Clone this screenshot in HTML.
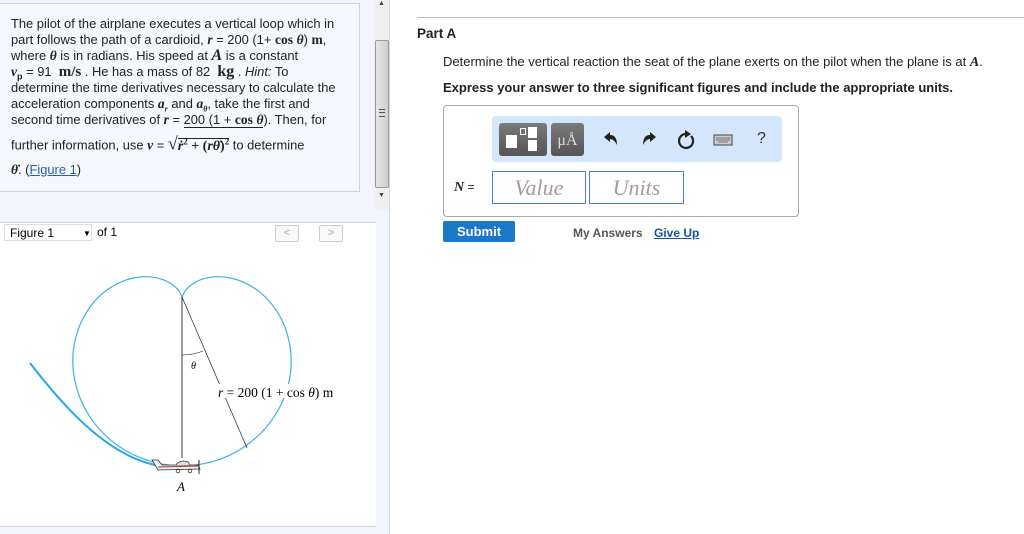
<!DOCTYPE html>
<html><head><meta charset="utf-8"><style>
body{margin:0;width:1024px;height:534px;overflow:hidden;background:#fff;font-family:"Liberation Sans",Arial,sans-serif;position:relative}
.abs{position:absolute}
#left{left:0;top:0;width:389px;height:534px;background:#f2f6fc;border-right:1px solid #c9d8ea}
#txt{left:0;top:3px;width:360px;height:189px;border:1px solid #c5d6ea;border-left:none;background:#f4f8fd;box-sizing:border-box;font-size:12.9px;color:#222}
#txt div{position:absolute;left:11px;white-space:nowrap;line-height:16px}
.m{font-family:"Liberation Serif",serif;font-style:italic;font-weight:bold;font-size:13.5px}
.s{font-family:"Liberation Serif",serif;font-weight:bold;font-size:13.5px}
#sb{left:374px;top:0;width:15px;height:210px;background:#f0f0f0}
#thumb{left:375px;top:40px;width:12px;height:146px;background:linear-gradient(90deg,#e6e6e6,#cfcfcf);border:1px solid #9a9a9a;border-radius:2px}
#figbar{left:0;top:222px;width:376px;height:21px;background:#fff;border-top:1px solid #c9d8ea;border-bottom:1px solid #c9d8ea}
#fig{left:0;top:244px;width:376px;height:282px;background:#fff;border-bottom:1px solid #c9d8ea}
.btn{border:1px solid #c8ced6;border-radius:2px;background:#f8f8f8;width:22px;height:15px;color:#aaa;font-size:11px;text-align:center;line-height:15px}
#right{left:390px;top:0;width:634px;height:534px}
</style></head><body>
<div id="left" class="abs"></div>
<div id="txt" class="abs">
<div style="top:12px">The pilot of the airplane executes a vertical loop which in</div>
<div style="top:28px">part follows the path of a cardioid, <span class="m">r</span> = 200 (1+ <span class="s">cos</span> <span class="m">θ</span>) <span class="s">m</span>,</div>
<div style="top:44px">where <span class="m">θ</span> is in radians. His speed at <span class="m" style="font-size:16px">A</span> is a constant</div>
<div style="top:60px"><span class="m">v</span><sub style="font-size:9px;font-weight:bold">p</sub> = 91 &nbsp;<span class="s" style="font-size:15px">m/s</span> . He has a mass of 82 &nbsp;<span class="s" style="font-size:16px">kg</span> . <i>Hint:</i> To</div>
<div style="top:76px">determine the time derivatives necessary to calculate the</div>
<div style="top:92px">acceleration components <span class="m">a<sub style="font-size:8px">r</sub></span> and <span class="m">a<sub style="font-size:8px">θ</sub></span>, take the first and</div>
<div style="top:108px">second time derivatives of <span class="m">r</span> = <span style="border-bottom:1px solid #222">200 (1 + <span class="s">cos</span> <span class="m">θ</span></span>). Then, for</div>
<div style="top:129px">further information, use <span class="m">v</span> = <span style="font-family:'Liberation Serif',serif;font-size:18px">√</span><span style="border-top:1px solid #222;font-family:'Liberation Serif',serif;font-weight:bold;font-size:14px"><i>ṙ</i><sup style="font-size:9px">2</sup> + (<i>rθ̇</i>)<sup style="font-size:9px">2</sup></span> to determine</div>
<div style="top:158px"><span class="m">θ̇</span>. (<span style="color:#2a5db0;text-decoration:underline">Figure 1</span>)</div>
</div>
<div id="sb" class="abs"><div class="abs" style="left:4px;top:0;font-size:7px;color:#444">▲</div><div class="abs" style="left:4px;top:192px;font-size:7px;color:#444">▼</div></div>
<div id="thumb" class="abs"><div class="abs" style="left:3px;top:68px;width:6px;height:6px;border-top:1px solid #555;border-bottom:1px solid #555"></div><div class="abs" style="left:3px;top:71px;width:6px;border-top:1px solid #555"></div></div>
<div id="figbar" class="abs"><div class="abs" style="left:4px;top:1px;width:88px;height:17px;border:1px solid #ddd;background:#fff;font-size:12px;line-height:17px;padding-left:5px;box-sizing:border-box">Figure 1<span style="position:absolute;left:78px;top:0;font-size:8px">▼</span></div><div class="abs" style="left:97px;top:2px;font-size:12px">of 1</div><div class="abs btn" style="left:275px;top:2px">&lt;</div><div class="abs btn" style="left:319px;top:2px">&gt;</div></div>
<div id="fig" class="abs"></div>
<svg class="abs" style="left:0;top:0" width="390" height="534">
<path d="M160.25,463.7 Q182,468 203.75,463.7 Q225.5,459.4 243.65,447.25 Q261.8,435.1 273.5,417.65 Q285.2,400.2 289.15,380.65 Q293.1,361.1 289.5,343 Q285.9,324.9 276.7,310.95 Q267.5,297 255.35,288.8 Q243.2,280.6 231.1,278.1 Q219,275.6 209.35,277.45 Q199.7,279.3 193.7,283.2 Q187.7,287.1 185.25,290.65 L182,297 L178.75,290.65 Q176.3,287.1 170.3,283.2 Q164.3,279.3 154.65,277.45 Q145,275.6 132.9,278.1 Q120.8,280.6 108.65,288.8 Q96.5,297 87.3,310.95 Q78.1,324.9 74.5,343 Q70.9,361.1 74.85,380.65 Q78.8,400.2 90.5,417.65 Q102.2,435.1 120.35,447.25 Q138.5,459.4 160.25,463.7" fill="none" stroke="#3cb0e4" stroke-width="1.2"/>
<path d="M30,363 C70,415 110,455 155,465" fill="none" stroke="#29a8e0" stroke-width="2"/>
<line x1="182" y1="297" x2="182" y2="458" stroke="#222" stroke-width="0.9"/>
<line x1="182" y1="297" x2="247" y2="448" stroke="#222" stroke-width="0.7"/>
<path d="M182,355 Q193,355 203,351" fill="none" stroke="#222" stroke-width="0.6"/>
<text x="191" y="369" font-family="Liberation Serif" font-style="italic" font-size="10">θ</text>
<rect x="216" y="384" width="128" height="14" fill="#fff"/>
<text x="218" y="397" font-family="Liberation Serif" font-size="13.5"><tspan font-style="italic">r</tspan> = 200 (1 + cos <tspan font-style="italic">θ</tspan>) m</text>
<path d="M152,460 L158,460 L162,465 L198,465 L200,469 L158,470 Z" fill="#eee" stroke="#333" stroke-width="0.8"/>
<path d="M176,465 Q180,459 188,462 L190,465" fill="#ddd" stroke="#333" stroke-width="0.7"/>
<line x1="158" y1="467" x2="198" y2="466" stroke="#a33" stroke-width="1"/>
<circle cx="178" cy="471" r="1.8" fill="none" stroke="#333" stroke-width="0.8"/><circle cx="190" cy="471" r="1.8" fill="none" stroke="#333" stroke-width="0.8"/>
<line x1="199" y1="460" x2="199" y2="474" stroke="#222"/>
<text x="177" y="491" font-family="Liberation Serif" font-style="italic" font-size="13">A</text>
</svg>
<div id="right" class="abs">
<div class="abs" style="left:27px;top:17px;width:607px;border-top:1px solid #bbb"></div>
<div class="abs" style="left:27px;top:26px;font-size:13.5px;font-weight:bold;color:#222">Part A</div>
<div class="abs" style="left:53px;top:54px;font-size:13px;color:#222;white-space:nowrap">Determine the vertical reaction the seat of the plane exerts on the pilot when the plane is at <b style="font-family:'Liberation Serif',serif;font-style:italic;font-size:14px">A</b>.</div>
<div class="abs" style="left:53px;top:80px;font-size:13px;font-weight:bold;color:#222;white-space:nowrap">Express your answer to three significant figures and include the appropriate units.</div>
<div class="abs" style="left:53px;top:105px;width:356px;height:112px;border:1px solid #aaa;border-radius:4px;box-sizing:border-box"></div>
<div class="abs" style="left:102px;top:116px;width:290px;height:46px;background:#d3e6fb;border-radius:4px"></div>
<div class="abs" style="left:109px;top:123px;width:48px;height:33px;background:linear-gradient(#7a7a7a,#555);border-radius:3px"><div class="abs" style="left:7px;top:12px;width:11px;height:13px;background:#fff"></div><div class="abs" style="left:21px;top:5px;width:4px;height:5px;border:1px solid #fff"></div><div class="abs" style="left:29px;top:4px;width:9px;height:11px;background:#fff"></div><div class="abs" style="left:29px;top:17px;width:9px;height:11px;background:#fff"></div></div>
<div class="abs" style="left:161px;top:123px;width:33px;height:33px;background:linear-gradient(#7a7a7a,#555);border-radius:3px;color:#ddd;font-family:'Liberation Serif',serif;font-size:16px;text-align:center;line-height:36px">μÅ</div>
<svg class="abs" style="left:210px;top:128px" width="180" height="24">
<path d="M4,9 L10,4 L10,7 Q17,7 17,17 Q14,11 10,11 L10,14 Z" fill="#222"/>
<path d="M56,9 L50,4 L50,7 Q43,7 43,17 Q46,11 50,11 L50,14 Z" fill="#222"/>
<path d="M87,6 A7,7 0 1 0 91,8" fill="none" stroke="#222" stroke-width="2.2"/>
<path d="M85,2 L91,6 L85,10 Z" fill="#222"/>
<rect x="114" y="7" width="18" height="10" fill="#ccc" stroke="#444" stroke-width="1"/>
<path d="M116,10 H130 M116,12 H130 M118,14 H128" stroke="#555" stroke-width="0.8"/>
</svg>
<div class="abs" style="left:367px;top:130px;font-size:16px;color:#333">?</div>
<div class="abs" style="left:64px;top:180px;font-family:'Liberation Serif',serif;font-size:14px;color:#222"><b><i>N</i></b><span style="font-family:'Liberation Sans';font-size:12px"> =</span></div>
<div class="abs" style="left:102px;top:171px;width:94px;height:33px;border:1px solid #4a7fd8;box-sizing:border-box;font-family:'Liberation Serif',serif;font-style:italic;font-size:22px;color:#a99;text-align:center;line-height:31px">Value</div>
<div class="abs" style="left:199px;top:171px;width:95px;height:33px;border:1px solid #4a7fd8;box-sizing:border-box;font-family:'Liberation Serif',serif;font-style:italic;font-size:22px;color:#a99;text-align:center;line-height:31px">Units</div>
<div class="abs" style="left:53px;top:221px;width:72px;height:21px;background:#1b78c8;border-radius:2px;color:#fff;font-size:13px;font-weight:bold;text-align:center;line-height:21px">Submit</div>
<div class="abs" style="left:183px;top:226px;font-size:12px;font-weight:bold;color:#555">My Answers</div>
<div class="abs" style="left:264px;top:226px;font-size:12px;font-weight:bold;color:#1a4fa8;text-decoration:underline">Give Up</div>
</div>
</body></html>
